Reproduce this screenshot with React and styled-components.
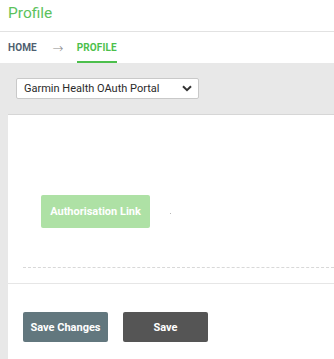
import React from "react";
import styled, { createGlobalStyle } from "styled-components";

const Global = createGlobalStyle`
  html, body { margin: 0; padding: 0; background: #ffffff; }
  body { font-family: Roboto, "Liberation Sans", Arial, sans-serif; }
  * { box-sizing: border-box; }
`;

const Page = styled.div`
  width: 334px;
  height: 359px;
  display: flex;
  flex-direction: column;
  overflow: hidden;
`;

const Header = styled.header`
  height: 32px;
  padding: 3px 8px 0;
  border-bottom: 1px solid #e2e2e2;
`;

const Title = styled.h1`
  margin: 0;
  font-size: 15.5px;
  font-weight: 400;
  line-height: 20px;
  color: #5cc25c;
`;

const Crumbs = styled.nav`
  height: 31px;
  padding: 0 8px;
  display: flex;
  align-items: stretch;
`;

const Crumb = styled.span`
  display: flex;
  align-items: center;
  font-size: 10px;
  font-weight: 700;
  letter-spacing: 0.1px;
  text-transform: uppercase;
  color: ${(p) => (p.$active ? "#4cbf4c" : "#4f5f70")};
  border-bottom: 2px solid ${(p) => (p.$active ? "#4cbf4c" : "transparent")};
  padding-top: 2px;
`;

const Arrow = styled.span`
  display: flex;
  align-items: center;
  justify-content: center;
  width: 12px;
  margin: 0 13px 0 15px;
  padding-top: 2px;
  color: #8a8a8a;
  font-size: 13px;
  font-family: "DejaVu Sans", sans-serif;
  font-weight: 300;
`;

const Main = styled.main`
  flex: 1;
  background: #e8e8e8;
  padding: 15px 0 0 8px;
  display: flex;
  flex-direction: column;
  gap: 15px;
`;

const SelectBox = styled.div`
  margin-left: 8px;
  width: 183px;
  height: 21px;
  background: #ffffff;
  border: 1px solid #c9c9c9;
  border-radius: 2px;
  display: flex;
  align-items: center;
  justify-content: space-between;
  padding: 0 6px 0 7px;
  font-size: 11px;
  color: #2a2a2a;
`;

const Card = styled.section`
  flex: 1;
  background: #ffffff;
  border-top: 1px solid #d6d6d6;
  display: flex;
  flex-direction: column;
`;

const LinkArea = styled.div`
  margin-left: 15px;
  height: 153px;
  border-bottom: 1px dashed #d8d8d8;
  padding: 80px 0 0 18px;
  display: flex;
  align-items: flex-start;
  gap: 20px;
`;

const Button = styled.button`
  height: ${(p) => p.$h || 30}px;
  width: ${(p) => p.$w}px;
  border: none;
  border-radius: 2px;
  background: ${(p) => p.$bg};
  color: #ffffff;
  font-family: Roboto, "Liberation Sans", Arial, sans-serif;
  font-size: 11px;
  font-weight: 700;
  padding: 0;
  cursor: pointer;
`;

const Dot = styled.span`
  margin-top: 18px;
  width: 1px;
  height: 1px;
  background: #b8b8b8;
`;

const Divider = styled.hr`
  margin: 15px 0 0;
  border: none;
  border-top: 1px solid #e6e6e6;
`;

const Footer = styled.div`
  padding: 28px 15px 0;
  display: flex;
  gap: 15px;
`;

export default function App() {
  return (
    <Page>
      <Global />
      <Header>
        <Title>Profile</Title>
      </Header>
      <Crumbs>
        <Crumb>Home</Crumb>
        <Arrow>→</Arrow>
        <Crumb $active>Profile</Crumb>
      </Crumbs>
      <Main>
        <SelectBox>
          <span>Garmin Health OAuth Portal</span>
          <svg width="10" height="7" viewBox="0 0 10 7">
            <path d="M1 1.2 L5 5.2 L9 1.2" fill="none" stroke="#333" strokeWidth="2" />
          </svg>
        </SelectBox>
        <Card>
          <LinkArea>
            <Button $w={109} $h={33} $bg="#aee1a5">Authorisation Link</Button>
            <Dot />
          </LinkArea>
          <Divider />
          <Footer>
            <Button $w={85} $bg="#62777e">Save Changes</Button>
            <Button $w={85} $bg="#555555">Save</Button>
          </Footer>
        </Card>
      </Main>
    </Page>
  );
}
